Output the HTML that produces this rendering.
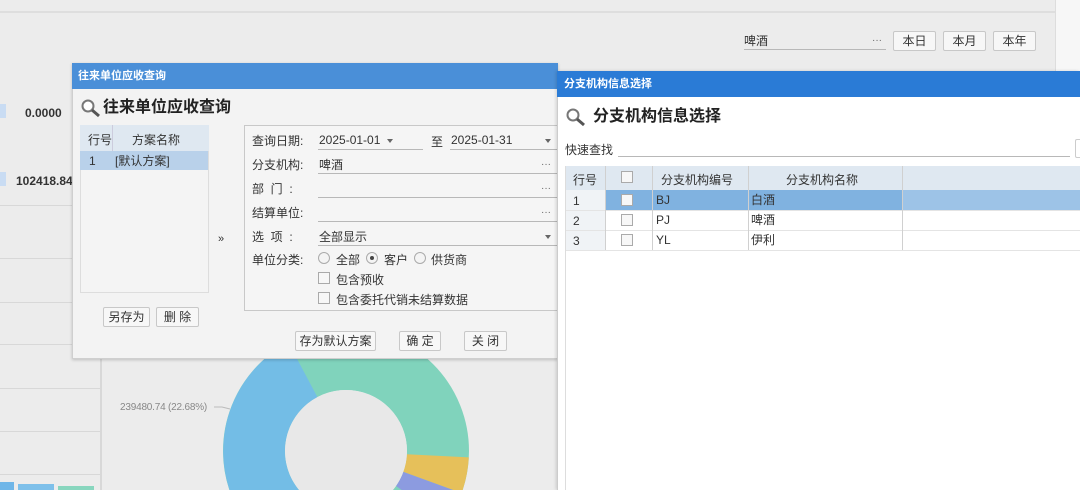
<!DOCTYPE html>
<html><head><meta charset="utf-8"><style>
*{box-sizing:border-box;margin:0;padding:0}
html,body{width:1080px;height:490px;overflow:hidden}
body{background:#ececec;font-family:"Liberation Sans","Noto Sans CJK SC",sans-serif;font-size:12px;line-height:14px;color:#333;position:relative}
.a{position:absolute}
.btn{position:absolute;border:1px solid #c8c8c8;background:#f7f7f7;border-radius:2px;font-size:12px;text-align:center;color:#333}
.lbl{position:absolute;font-size:12px;color:#333;white-space:nowrap}
.ln{position:absolute;border-bottom:1px solid #b8b8b8;height:1px}
.dots{position:absolute;font-size:10px;color:#666}
.tri{position:absolute;width:0;height:0;border-left:3px solid transparent;border-right:3px solid transparent;border-top:4px solid #666}
.rad{position:absolute;width:12px;height:12px;border:1px solid #aaa;border-radius:50%;background:#f4f4f4}
.cb{position:absolute;width:12px;height:12px;border:1px solid #aaa;background:#f7f7f7}
</style></head><body>
<div class="a" style="left:0;top:11px;width:1055px;height:2px;background:#dedede"></div>
<div class="a" style="left:1055px;top:0;width:25px;height:72px;background:#f7f7f7;border-left:1px solid #ddd"></div>
<div class="lbl" style="left:744px;top:34px">啤酒</div>
<div class="ln" style="left:744px;top:49px;width:142px"></div>
<div class="dots" style="left:872px;top:34px">···</div>
<div class="btn" style="left:893px;top:31px;width:43px;height:20px;line-height:18px">本日</div>
<div class="btn" style="left:943px;top:31px;width:43px;height:20px;line-height:18px">本月</div>
<div class="btn" style="left:993px;top:31px;width:43px;height:20px;line-height:18px">本年</div>
<div class="a" style="left:0;top:104px;width:6px;height:14px;background:#c9dcf3"></div>
<div class="a" style="left:25px;top:106px;font-weight:bold;font-size:12px">0.0000</div>
<div class="a" style="left:0;top:172px;width:6px;height:14px;background:#c9dcf3"></div>
<div class="a" style="left:16px;top:174px;font-weight:bold;font-size:12px">102418.84</div>
<div class="a" style="left:0;top:205px;width:72px;height:1px;background:#d8d8d8"></div>
<div class="a" style="left:0;top:258px;width:100px;height:1px;background:#d8d8d8"></div>
<div class="a" style="left:0;top:302px;width:100px;height:1px;background:#d8d8d8"></div>
<div class="a" style="left:0;top:344px;width:100px;height:1px;background:#d8d8d8"></div>
<div class="a" style="left:0;top:388px;width:100px;height:1px;background:#d8d8d8"></div>
<div class="a" style="left:0;top:431px;width:100px;height:1px;background:#d8d8d8"></div>
<div class="a" style="left:0;top:474px;width:100px;height:1px;background:#d8d8d8"></div>
<div class="a" style="left:100px;top:358px;width:2px;height:132px;background:#d8d8d8"></div>
<div class="a" style="left:0;top:482px;width:14px;height:8px;background:#6fb6e8"></div>
<div class="a" style="left:18px;top:484px;width:36px;height:6px;background:#7ec0ea"></div>
<div class="a" style="left:58px;top:486px;width:36px;height:4px;background:#88d6be"></div>
<svg class="a" style="left:0;top:0" width="1080" height="490">
<g transform="translate(346,451)">
<circle r="92" fill="none" stroke="#80d3bc" stroke-width="62"/>
<path d="M-57.7,-108.6 A123,123 0 0 0 42,115.6 L20.9,57.3 A61,61 0 0 1 -28.6,-53.9 Z" fill="#73bde6"/>
<path d="M122.8,6.4 A123,123 0 0 1 115.6,42.1 L57.3,20.9 A61,61 0 0 0 60.9,3.2 Z" fill="#e6c05a"/>
<path d="M115.6,42.1 A123,123 0 0 1 100.7,70.6 L50,35 A61,61 0 0 0 57.3,20.9 Z" fill="#8c9be0"/>
<circle r="61" fill="#e8e8e8"/>
</g>
<polyline points="214,407 222,407 230,409" fill="none" stroke="#bbb"/>
</svg>
<div class="a" style="left:120px;top:401px;font-size:10px;color:#888;letter-spacing:-0.2px">239480.74 (22.68%)</div>

<div class="a" style="left:72px;top:63px;width:486px;height:296px;background:#f3f3f3;border:1px solid #cfcfcf;box-shadow:0 1px 3px rgba(0,0,0,.2)"></div>
<div class="a" style="left:72px;top:63px;width:486px;height:26px;background:#4a8fd8"></div>
<div class="a" style="left:78px;top:69px;color:#fff;font-size:11px;font-weight:bold">往来单位应收查询</div>
<svg class="a" style="left:80px;top:98px" width="22" height="20"><circle cx="8" cy="8" r="5.5" fill="#fff" stroke="#777" stroke-width="2"/><line x1="12" y1="12" x2="19" y2="18" stroke="#555" stroke-width="3"/></svg>
<div class="a" style="left:103px;top:99px;font-size:16px;line-height:18px;font-weight:bold;color:#222">往来单位应收查询</div>
<div class="a" style="left:80px;top:125px;width:129px;height:168px;background:#f4f4f4;border:1px solid #ddd"></div>
<div class="a" style="left:80px;top:125px;width:129px;height:26px;background:#dfe8f1"></div>
<div class="a" style="left:112px;top:125px;width:1px;height:45px;background:#ccd"></div>
<div class="lbl" style="left:88px;top:133px">行号</div>
<div class="lbl" style="left:132px;top:133px">方案名称</div>
<div class="a" style="left:80px;top:151px;width:128px;height:19px;background:#b9d1ea"></div>
<div class="lbl" style="left:89px;top:154px">1</div>
<div class="lbl" style="left:115px;top:154px">[默认方案]</div>
<div class="btn" style="left:103px;top:307px;width:47px;height:20px;line-height:18px">另存为</div>
<div class="btn" style="left:156px;top:307px;width:43px;height:20px;line-height:18px">删 除</div>
<div class="lbl" style="left:218px;top:232px;font-size:11px">»</div>
<div class="a" style="left:244px;top:125px;width:314px;height:186px;border:1px solid #c8c8c8;border-right:none;background:#f5f5f5"></div>
<div class="lbl" style="left:252px;top:134px">查询日期:</div>
<div class="lbl" style="left:319px;top:133px">2025-01-01</div>
<div class="ln" style="left:318px;top:149px;width:105px"></div>
<div class="tri" style="left:387px;top:139px"></div>
<div class="lbl" style="left:431px;top:135px">至</div>
<div class="lbl" style="left:451px;top:133px">2025-01-31</div>
<div class="ln" style="left:450px;top:149px;width:108px"></div>
<div class="tri" style="left:545px;top:139px"></div>
<div class="lbl" style="left:252px;top:158px">分支机构:</div>
<div class="lbl" style="left:319px;top:158px">啤酒</div>
<div class="ln" style="left:318px;top:173px;width:240px"></div>
<div class="dots" style="left:541px;top:158px">···</div>
<div class="lbl" style="left:252px;top:182px">部 &nbsp;门 &nbsp;:</div>
<div class="ln" style="left:318px;top:197px;width:240px"></div>
<div class="dots" style="left:541px;top:182px">···</div>
<div class="lbl" style="left:252px;top:206px">结算单位:</div>
<div class="ln" style="left:318px;top:221px;width:240px"></div>
<div class="dots" style="left:541px;top:206px">···</div>
<div class="lbl" style="left:252px;top:230px">选 &nbsp;项 &nbsp;:</div>
<div class="lbl" style="left:319px;top:230px">全部显示</div>
<div class="ln" style="left:318px;top:245px;width:240px"></div>
<div class="tri" style="left:545px;top:235px"></div>
<div class="lbl" style="left:252px;top:253px">单位分类:</div>
<div class="rad" style="left:318px;top:252px"></div><div class="lbl" style="left:336px;top:253px">全部</div>
<div class="rad" style="left:366px;top:252px"></div><div class="a" style="left:370px;top:256px;width:4px;height:4px;border-radius:50%;background:#444"></div><div class="lbl" style="left:384px;top:253px">客户</div>
<div class="rad" style="left:414px;top:252px"></div><div class="lbl" style="left:431px;top:253px">供货商</div>
<div class="cb" style="left:318px;top:272px"></div><div class="lbl" style="left:336px;top:273px">包含预收</div>
<div class="cb" style="left:318px;top:292px"></div><div class="lbl" style="left:336px;top:293px">包含委托代销未结算数据</div>
<div class="btn" style="left:295px;top:331px;width:81px;height:20px;line-height:18px">存为默认方案</div>
<div class="btn" style="left:399px;top:331px;width:42px;height:20px;line-height:18px">确 定</div>
<div class="btn" style="left:464px;top:331px;width:43px;height:20px;line-height:18px">关 闭</div>

<div class="a" style="left:557px;top:71px;width:523px;height:419px;background:#fff;border-left:1px solid #ccc;box-shadow:-1px 0 3px rgba(0,0,0,.15)"></div>
<div class="a" style="left:557px;top:71px;width:523px;height:26px;background:#2a7bd6"></div>
<div class="a" style="left:564px;top:77px;color:#fff;font-size:11px;font-weight:bold">分支机构信息选择</div>
<svg class="a" style="left:565px;top:107px" width="22" height="20"><circle cx="8" cy="8" r="5.5" fill="#fff" stroke="#777" stroke-width="2"/><line x1="12" y1="12" x2="19" y2="18" stroke="#555" stroke-width="3"/></svg>
<div class="a" style="left:593px;top:108px;font-size:16px;line-height:18px;font-weight:bold;color:#222">分支机构信息选择</div>
<div class="lbl" style="left:565px;top:143px">快速查找</div>
<div class="ln" style="left:618px;top:156px;width:452px"></div>
<div class="a" style="left:1075px;top:139px;width:8px;height:19px;border:1px solid #ccc;border-radius:2px"></div>
<div class="a" style="left:565px;top:166px;width:515px;height:324px;border:1px solid #ddd;border-right:none;border-bottom:none"></div>
<div class="a" style="left:566px;top:166px;width:514px;height:24px;background:#dfe8f1"></div>
<div class="a" style="left:605px;top:190px;width:297px;height:20px;background:#80b2e0"></div>
<div class="a" style="left:902px;top:190px;width:178px;height:20px;background:#9dc3e7"></div>
<div class="a" style="left:566px;top:190px;width:39px;height:60px;background:#f0f3f6"></div>
<div class="a" style="left:566px;top:210px;width:514px;height:1px;background:#e4e4e4"></div>
<div class="a" style="left:566px;top:230px;width:514px;height:1px;background:#e4e4e4"></div>
<div class="a" style="left:566px;top:250px;width:514px;height:1px;background:#e4e4e4"></div>
<div class="a" style="left:605px;top:166px;width:1px;height:84px;background:#d0d0d0"></div>
<div class="a" style="left:652px;top:166px;width:1px;height:84px;background:#d0d0d0"></div>
<div class="a" style="left:748px;top:166px;width:1px;height:84px;background:#d0d0d0"></div>
<div class="a" style="left:902px;top:166px;width:1px;height:84px;background:#d0d0d0"></div>
<div class="lbl" style="left:573px;top:173px">行号</div>
<div class="cb" style="left:621px;top:171px"></div>
<div class="lbl" style="left:661px;top:173px">分支机构编号</div>
<div class="lbl" style="left:786px;top:173px">分支机构名称</div>
<div class="lbl" style="left:573px;top:194px">1</div><div class="cb" style="left:621px;top:194px"></div><div class="lbl" style="left:656px;top:193px">BJ</div><div class="lbl" style="left:751px;top:193px">白酒</div>
<div class="lbl" style="left:573px;top:214px">2</div><div class="cb" style="left:621px;top:214px"></div><div class="lbl" style="left:656px;top:213px">PJ</div><div class="lbl" style="left:751px;top:213px">啤酒</div>
<div class="lbl" style="left:573px;top:234px">3</div><div class="cb" style="left:621px;top:234px"></div><div class="lbl" style="left:656px;top:233px">YL</div><div class="lbl" style="left:751px;top:233px">伊利</div>
</body></html>
